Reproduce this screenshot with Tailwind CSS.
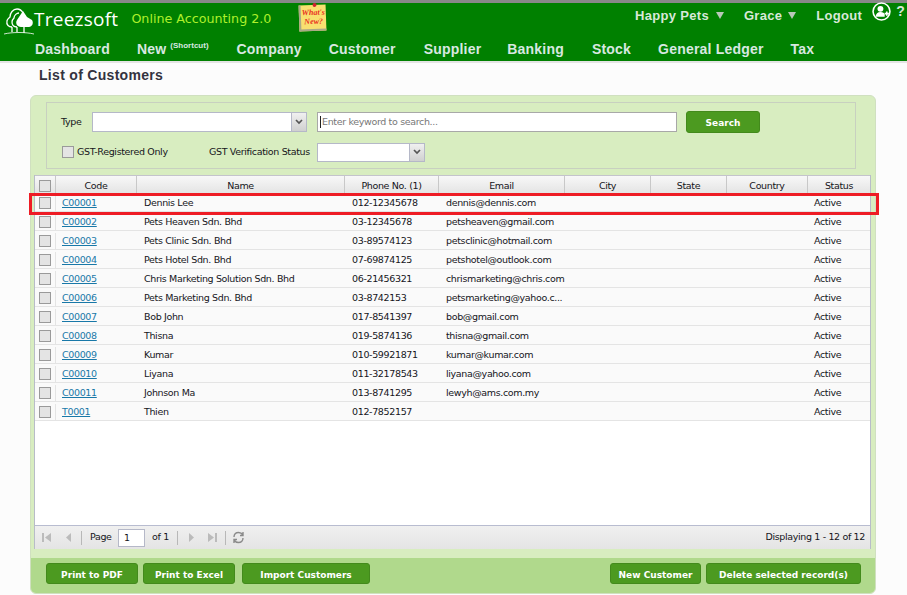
<!DOCTYPE html>
<html>
<head>
<meta charset="utf-8">
<script src="https://cdn.jsdelivr.net/npm/@tailwindcss/browser@4"></script>
</head>
<body class="bg-[#fcfcfc] font-['Liberation_Sans',sans-serif] h-[595px] w-[907px] overflow-hidden relative">
<header class="h-[63px] border-t-[3px] border-t-[#888888] border-b-2 border-b-[#e4e4e4] bg-[#008000]">
  <div class="h-[33px] flex items-center pl-[3px]">
    <svg class="w-[32px] h-[30px] shrink-0" viewBox="0 0 32 30" fill="none" stroke="#fff" stroke-width="1.3">
      <path d="M9 22c-3 0-6-2-5-6 0-2 2-3 3-4 0-4 3-8 7-8 3 0 5 2 6 4"/>
      <path d="M14 22c-3 0-5-2-5-5 0-2 1-3 2-4 0-3 3-5 5-5"/>
      <path d="M24 12l-4-6-6 9c-2 3 0 7 4 7h8c3 0 5-4 3-7z" fill="#fff" stroke="none"/>
      <path d="M21 22v6M9 22v5M14 22v5" />
      <path d="M1 29c8-2 22-2 30 0" stroke-width="0.8"/>
    </svg>
    <span class="font-['Open_Sans',sans-serif] text-[19px] text-white tracking-[0.25px] -ml-px">Treezsoft</span>
    <span class="font-['DejaVu_Sans',sans-serif] text-[12.7px] text-[#aef02c] ml-[13px] mb-[2px]">Online Accounting 2.0</span>
    <div class="ml-[28px] mb-[4px] relative w-[27px] h-[26px] bg-[#f8e070] border-l-2 border-b-2 border-[#a8a888] flex items-center justify-center text-center font-['Liberation_Serif',serif] italic font-bold text-[8px] leading-[9px] text-[#e83020] -rotate-2 shrink-0">What's<br>New?<span class="absolute -top-[2px] right-[9px] w-[4px] h-[4px] rounded-full bg-[#d02030]"></span></div>
    <div class="ml-auto mb-[8px] flex items-center text-[13px] font-bold text-[#d8e8d8] tracking-[0.3px]">
      <span>Happy Pets</span>
      <span class="ml-[7px] w-0 h-0 border-x-[4px] border-x-transparent border-t-[7px] border-t-[#b8c8b8]"></span>
      <span class="ml-[20px]">Grace</span>
      <span class="ml-[6px] w-0 h-0 border-x-[4px] border-x-transparent border-t-[7px] border-t-[#b8c8b8]"></span>
      <span class="ml-[20px]">Logout</span>
      <svg class="ml-[10px] w-[19px] h-[19px] -mt-[8px]" viewBox="0 0 18 18" fill="none">
        <circle cx="9" cy="9" r="8" stroke="#fff" stroke-width="1.5"/>
        <circle cx="8" cy="6.5" r="2.8" fill="#fff"/>
        <path d="M3.5 14c0-3 2-4.500 4.500-4.500s3.500 1 4 2v2.500z" fill="#fff"/>
        <path d="M12 11h4M14 9v4" stroke="#fff" stroke-width="1.5"/>
      </svg>
      <span class="ml-[5px] mr-[2px] -mt-[8px] text-[14px] text-[#d8e8d8]">?</span>
    </div>
  </div>
  <nav class="h-[25px] pt-[2px] flex items-center pl-[35px] text-[14px] font-bold text-[#d8e8e0] tracking-[0.2px]">
    <span>Dashboard</span>
    <span class="ml-[27px]">New</span>
    <span class="ml-[4px] text-[8px] tracking-normal -mt-[7px]">(Shortcut)</span>
    <span class="ml-[28px]">Company</span>
    <span class="ml-[27px]">Customer</span>
    <span class="ml-[28px]">Supplier</span>
    <span class="ml-[26px]">Banking</span>
    <span class="ml-[28px]">Stock</span>
    <span class="ml-[27px]">General Ledger</span>
    <span class="ml-[27px]">Tax</span>
  </nav>
</header>

<h1 class="h-[32px] pl-[39px] pt-[3px] text-[14px] leading-[18px] font-bold text-[#33333f] tracking-[0.3px]">List of Customers</h1>

<main class="mx-[30px] w-[846px] h-[499px] rounded-[6px] bg-[#d8edc0] flex flex-col border border-[#d0e0c0] text-[9.5px] tracking-[-0.35px] font-['DejaVu_Sans',sans-serif] text-[#15151a]">
  <section class="mt-[6px] ml-[15px] w-[810px] h-[67px] border border-[#c8d0c0] relative">
    <div class="flex items-center h-[22px] mt-[8px]">
      <span class="ml-[14px] w-[31px]">Type</span>
      <div class="w-[215px] h-[20px] bg-white border border-[#b5b8c8] flex justify-end">
        <span class="w-[15px] bg-gradient-to-b from-[#f0f0f0] to-[#d0d0d0] border-l border-[#b5b8c8] flex items-center justify-center"><svg class="w-[8px] h-[6px]" viewBox="0 0 8 6" fill="none" stroke="#555555" stroke-width="1.700"><path d="M1 1l3 3 3-3"/></svg></span>
      </div>
      <div class="ml-[10px] w-[360px] h-[20px] bg-white border border-[#a8a8a8] pl-[2px] text-[#777777] flex items-center"><span class="w-px h-[12px] bg-[#222222] mr-px"></span>Enter keyword to search...</div>
      <button class="ml-[9px] w-[74px] h-[22px] pt-[4px] rounded-[3px] bg-[#4c9a20] border border-[#438a1c] font-bold text-white text-[9px] tracking-normal font-['DejaVu_Sans',sans-serif]">Search</button>
    </div>
    <div class="flex items-center h-[20px] mt-[9px]">
      <span class="ml-[15px] w-[12px] h-[12px] border border-[#9a9a9a] bg-[#e4e4e4]"></span>
      <span class="ml-[3px] w-[132px] whitespace-nowrap">GST-Registered Only</span>
      <span class="w-[108px] whitespace-nowrap">GST Verification Status</span>
      <div class="w-[108px] h-[19px] bg-white border border-[#b5b8c8] flex justify-end">
        <span class="w-[15px] bg-gradient-to-b from-[#f0f0f0] to-[#d0d0d0] border-l border-[#b5b8c8] flex items-center justify-center"><svg class="w-[8px] h-[6px]" viewBox="0 0 8 6" fill="none" stroke="#555555" stroke-width="1.700"><path d="M1 1l3 3 3-3"/></svg></span>
      </div>
    </div>
  </section>

  <section class="mt-[6px] ml-[3px] w-[837px] h-[374px] border-x border-[#b8bcc8] bg-white flex flex-col">
    <div class="grid grid-cols-[21px_81px_208px_94px_126px_86px_76px_81px_62px] h-[18px] items-stretch text-center bg-gradient-to-b from-[#f8f8f8] to-[#e4e4e4] border-t border-[#c4c4cc] leading-[19px]">
      <div class="flex items-center justify-center border-r border-[#c8c8c8]"><span class="w-[12px] h-[12px] border border-[#9a9a9a] bg-[#e4e4e4]"></span></div>
      <div class="border-r border-[#c8c8c8]">Code</div>
      <div class="border-r border-[#c8c8c8]">Name</div>
      <div class="border-r border-[#c8c8c8]">Phone No. (1)</div>
      <div class="border-r border-[#c8c8c8]">Email</div>
      <div class="border-r border-[#c8c8c8]">City</div>
      <div class="border-r border-[#c8c8c8]">State</div>
      <div class="border-r border-[#c8c8c8]">Country</div>
      <div>Status</div>
    </div>
    <div class="grid grid-cols-[21px_81px_208px_94px_126px_86px_76px_81px_62px] h-[19px] pt-[2px] items-center border-b border-[#e4e4e4] bg-[#fafafa]"><span class="h-full flex items-center justify-center border-r border-[#e4e4e4]"><span class="w-[12px] h-[12px] border border-[#9a9a9a] bg-[#e4e4e4]"></span></span><a class="pl-[6px] text-[#1878a8] underline">C00001</a><span class="pl-[7px]">Dennis Lee</span><span class="pl-[7px]">012-12345678</span><span class="pl-[7px]">dennis@dennis.com</span><span></span><span></span><span></span><span class="pl-[6px]">Active</span></div>
    <div class="grid grid-cols-[21px_81px_208px_94px_126px_86px_76px_81px_62px] h-[19px] pt-[2px] items-center border-b border-[#e4e4e4] bg-[#fafafa]"><span class="h-full flex items-center justify-center border-r border-[#e4e4e4]"><span class="w-[12px] h-[12px] border border-[#9a9a9a] bg-[#e4e4e4]"></span></span><a class="pl-[6px] text-[#1878a8] underline">C00002</a><span class="pl-[7px]">Pets Heaven Sdn. Bhd</span><span class="pl-[7px]">03-12345678</span><span class="pl-[7px]">petsheaven@gmail.com</span><span></span><span></span><span></span><span class="pl-[6px]">Active</span></div>
    <div class="grid grid-cols-[21px_81px_208px_94px_126px_86px_76px_81px_62px] h-[19px] pt-[2px] items-center border-b border-[#e4e4e4] bg-[#fafafa]"><span class="h-full flex items-center justify-center border-r border-[#e4e4e4]"><span class="w-[12px] h-[12px] border border-[#9a9a9a] bg-[#e4e4e4]"></span></span><a class="pl-[6px] text-[#1878a8] underline">C00003</a><span class="pl-[7px]">Pets Clinic Sdn. Bhd</span><span class="pl-[7px]">03-89574123</span><span class="pl-[7px]">petsclinic@hotmail.com</span><span></span><span></span><span></span><span class="pl-[6px]">Active</span></div>
    <div class="grid grid-cols-[21px_81px_208px_94px_126px_86px_76px_81px_62px] h-[19px] pt-[2px] items-center border-b border-[#e4e4e4] bg-[#fafafa]"><span class="h-full flex items-center justify-center border-r border-[#e4e4e4]"><span class="w-[12px] h-[12px] border border-[#9a9a9a] bg-[#e4e4e4]"></span></span><a class="pl-[6px] text-[#1878a8] underline">C00004</a><span class="pl-[7px]">Pets Hotel Sdn. Bhd</span><span class="pl-[7px]">07-69874125</span><span class="pl-[7px]">petshotel@outlook.com</span><span></span><span></span><span></span><span class="pl-[6px]">Active</span></div>
    <div class="grid grid-cols-[21px_81px_208px_94px_126px_86px_76px_81px_62px] h-[19px] pt-[2px] items-center border-b border-[#e4e4e4] bg-[#fafafa]"><span class="h-full flex items-center justify-center border-r border-[#e4e4e4]"><span class="w-[12px] h-[12px] border border-[#9a9a9a] bg-[#e4e4e4]"></span></span><a class="pl-[6px] text-[#1878a8] underline">C00005</a><span class="pl-[7px]">Chris Marketing Solution Sdn. Bhd</span><span class="pl-[7px]">06-21456321</span><span class="pl-[7px]">chrismarketing@chris.com</span><span></span><span></span><span></span><span class="pl-[6px]">Active</span></div>
    <div class="grid grid-cols-[21px_81px_208px_94px_126px_86px_76px_81px_62px] h-[19px] pt-[2px] items-center border-b border-[#e4e4e4] bg-[#fafafa]"><span class="h-full flex items-center justify-center border-r border-[#e4e4e4]"><span class="w-[12px] h-[12px] border border-[#9a9a9a] bg-[#e4e4e4]"></span></span><a class="pl-[6px] text-[#1878a8] underline">C00006</a><span class="pl-[7px]">Pets Marketing Sdn. Bhd</span><span class="pl-[7px]">03-8742153</span><span class="pl-[7px]">petsmarketing@yahoo.c...</span><span></span><span></span><span></span><span class="pl-[6px]">Active</span></div>
    <div class="grid grid-cols-[21px_81px_208px_94px_126px_86px_76px_81px_62px] h-[19px] pt-[2px] items-center border-b border-[#e4e4e4] bg-[#fafafa]"><span class="h-full flex items-center justify-center border-r border-[#e4e4e4]"><span class="w-[12px] h-[12px] border border-[#9a9a9a] bg-[#e4e4e4]"></span></span><a class="pl-[6px] text-[#1878a8] underline">C00007</a><span class="pl-[7px]">Bob John</span><span class="pl-[7px]">017-8541397</span><span class="pl-[7px]">bob@gmail.com</span><span></span><span></span><span></span><span class="pl-[6px]">Active</span></div>
    <div class="grid grid-cols-[21px_81px_208px_94px_126px_86px_76px_81px_62px] h-[19px] pt-[2px] items-center border-b border-[#e4e4e4] bg-[#fafafa]"><span class="h-full flex items-center justify-center border-r border-[#e4e4e4]"><span class="w-[12px] h-[12px] border border-[#9a9a9a] bg-[#e4e4e4]"></span></span><a class="pl-[6px] text-[#1878a8] underline">C00008</a><span class="pl-[7px]">Thisna</span><span class="pl-[7px]">019-5874136</span><span class="pl-[7px]">thisna@gmail.com</span><span></span><span></span><span></span><span class="pl-[6px]">Active</span></div>
    <div class="grid grid-cols-[21px_81px_208px_94px_126px_86px_76px_81px_62px] h-[19px] pt-[2px] items-center border-b border-[#e4e4e4] bg-[#fafafa]"><span class="h-full flex items-center justify-center border-r border-[#e4e4e4]"><span class="w-[12px] h-[12px] border border-[#9a9a9a] bg-[#e4e4e4]"></span></span><a class="pl-[6px] text-[#1878a8] underline">C00009</a><span class="pl-[7px]">Kumar</span><span class="pl-[7px]">010-59921871</span><span class="pl-[7px]">kumar@kumar.com</span><span></span><span></span><span></span><span class="pl-[6px]">Active</span></div>
    <div class="grid grid-cols-[21px_81px_208px_94px_126px_86px_76px_81px_62px] h-[19px] pt-[2px] items-center border-b border-[#e4e4e4] bg-[#fafafa]"><span class="h-full flex items-center justify-center border-r border-[#e4e4e4]"><span class="w-[12px] h-[12px] border border-[#9a9a9a] bg-[#e4e4e4]"></span></span><a class="pl-[6px] text-[#1878a8] underline">C00010</a><span class="pl-[7px]">Liyana</span><span class="pl-[7px]">011-32178543</span><span class="pl-[7px]">liyana@yahoo.com</span><span></span><span></span><span></span><span class="pl-[6px]">Active</span></div>
    <div class="grid grid-cols-[21px_81px_208px_94px_126px_86px_76px_81px_62px] h-[19px] pt-[2px] items-center border-b border-[#e4e4e4] bg-[#fafafa]"><span class="h-full flex items-center justify-center border-r border-[#e4e4e4]"><span class="w-[12px] h-[12px] border border-[#9a9a9a] bg-[#e4e4e4]"></span></span><a class="pl-[6px] text-[#1878a8] underline">C00011</a><span class="pl-[7px]">Johnson Ma</span><span class="pl-[7px]">013-8741295</span><span class="pl-[7px]">lewyh@ams.com.my</span><span></span><span></span><span></span><span class="pl-[6px]">Active</span></div>
    <div class="grid grid-cols-[21px_81px_208px_94px_126px_86px_76px_81px_62px] h-[19px] pt-[2px] items-center border-b border-[#e4e4e4] bg-[#fafafa]"><span class="h-full flex items-center justify-center border-r border-[#e4e4e4]"><span class="w-[12px] h-[12px] border border-[#9a9a9a] bg-[#e4e4e4]"></span></span><a class="pl-[6px] text-[#1878a8] underline">T0001</a><span class="pl-[7px]">Thien</span><span class="pl-[7px]">012-7852157</span><span></span><span></span><span></span><span></span><span class="pl-[6px]">Active</span></div>
    <div class="mt-auto h-[24px] border-t border-[#b8bcd0] bg-gradient-to-b from-[#f0f0f0] to-[#e4e4e4] flex items-center text-[#15151a]">
      <svg class="ml-[6px] w-[11px] h-[11px] text-[#bbbbbb]" viewBox="0 0 11 11" fill="currentColor"><path d="M1 1h2v9H1zM10 1v9L4 5.500z"/></svg>
      <svg class="ml-[11px] w-[11px] h-[11px] text-[#bbbbbb]" viewBox="0 0 11 11" fill="currentColor"><path d="M8 1v9L3 5.500z"/></svg>
      <span class="ml-[7px] w-px h-[14px] bg-[#b8b8b8]"></span>
      <span class="ml-[8px] w-[28px]">Page</span>
      <span class="w-[27px] h-[18px] bg-white border border-[#b5b8c8] pl-[5px] leading-[16px]">1</span>
      <span class="ml-[7px] w-[25px]">of 1</span>
      <span class="w-px h-[14px] bg-[#b8b8b8]"></span>
      <svg class="ml-[8px] w-[11px] h-[11px] text-[#bbbbbb]" viewBox="0 0 11 11" fill="currentColor"><path d="M3 1v9l5-4.500z"/></svg>
      <svg class="ml-[10px] w-[11px] h-[11px] text-[#bbbbbb]" viewBox="0 0 11 11" fill="currentColor"><path d="M8 1h2v9H8zM1 1v9l6-4.500z"/></svg>
      <span class="ml-[7px] w-px h-[14px] bg-[#b8b8b8]"></span>
      <svg class="ml-[6px] w-[13px] h-[13px]" viewBox="0 0 13 13" fill="none" stroke="#8a8a8a" stroke-width="1.400"><path d="M2 6c0-3 2-4.500 4.500-4.500S10 2.500 11 4M11 1v3.500H8"/><path d="M11 7c0 3-2 4.500-4.500 4.500S3 10.500 2 9M2 12V8.500h3"/></svg>
      <span class="ml-auto mr-[5px]">Displaying 1 - 12 of 12</span>
    </div>
  </section>

  <footer class="mt-[9px] flex-1 bg-[#b0d98c] rounded-b-[5px] pt-[5px] pl-[15px] pr-[14px] flex gap-[5px] text-white font-bold text-[9px] tracking-normal">
    <button class="w-[92px] h-[21px] pt-[4px] rounded-[3px] bg-[#4c9a20] border border-[#438a1c]">Print to PDF</button>
    <button class="w-[92px] h-[21px] pt-[4px] rounded-[3px] bg-[#4c9a20] border border-[#438a1c]">Print to Excel</button>
    <button class="ml-[2px] w-[128px] h-[21px] pt-[4px] rounded-[3px] bg-[#4c9a20] border border-[#438a1c]">Import Customers</button>
    <button class="ml-auto w-[91px] h-[21px] pt-[4px] rounded-[3px] bg-[#4c9a20] border border-[#438a1c]">New Customer</button>
    <button class="w-[155px] h-[21px] pt-[4px] rounded-[3px] bg-[#4c9a20] border border-[#438a1c]">Delete selected record(s)</button>
  </footer>
</main>

<div class="absolute left-[29px] top-[193px] w-[850px] h-[22px] border-[3px] border-[#ee1c25]"></div>
</body>
</html>
